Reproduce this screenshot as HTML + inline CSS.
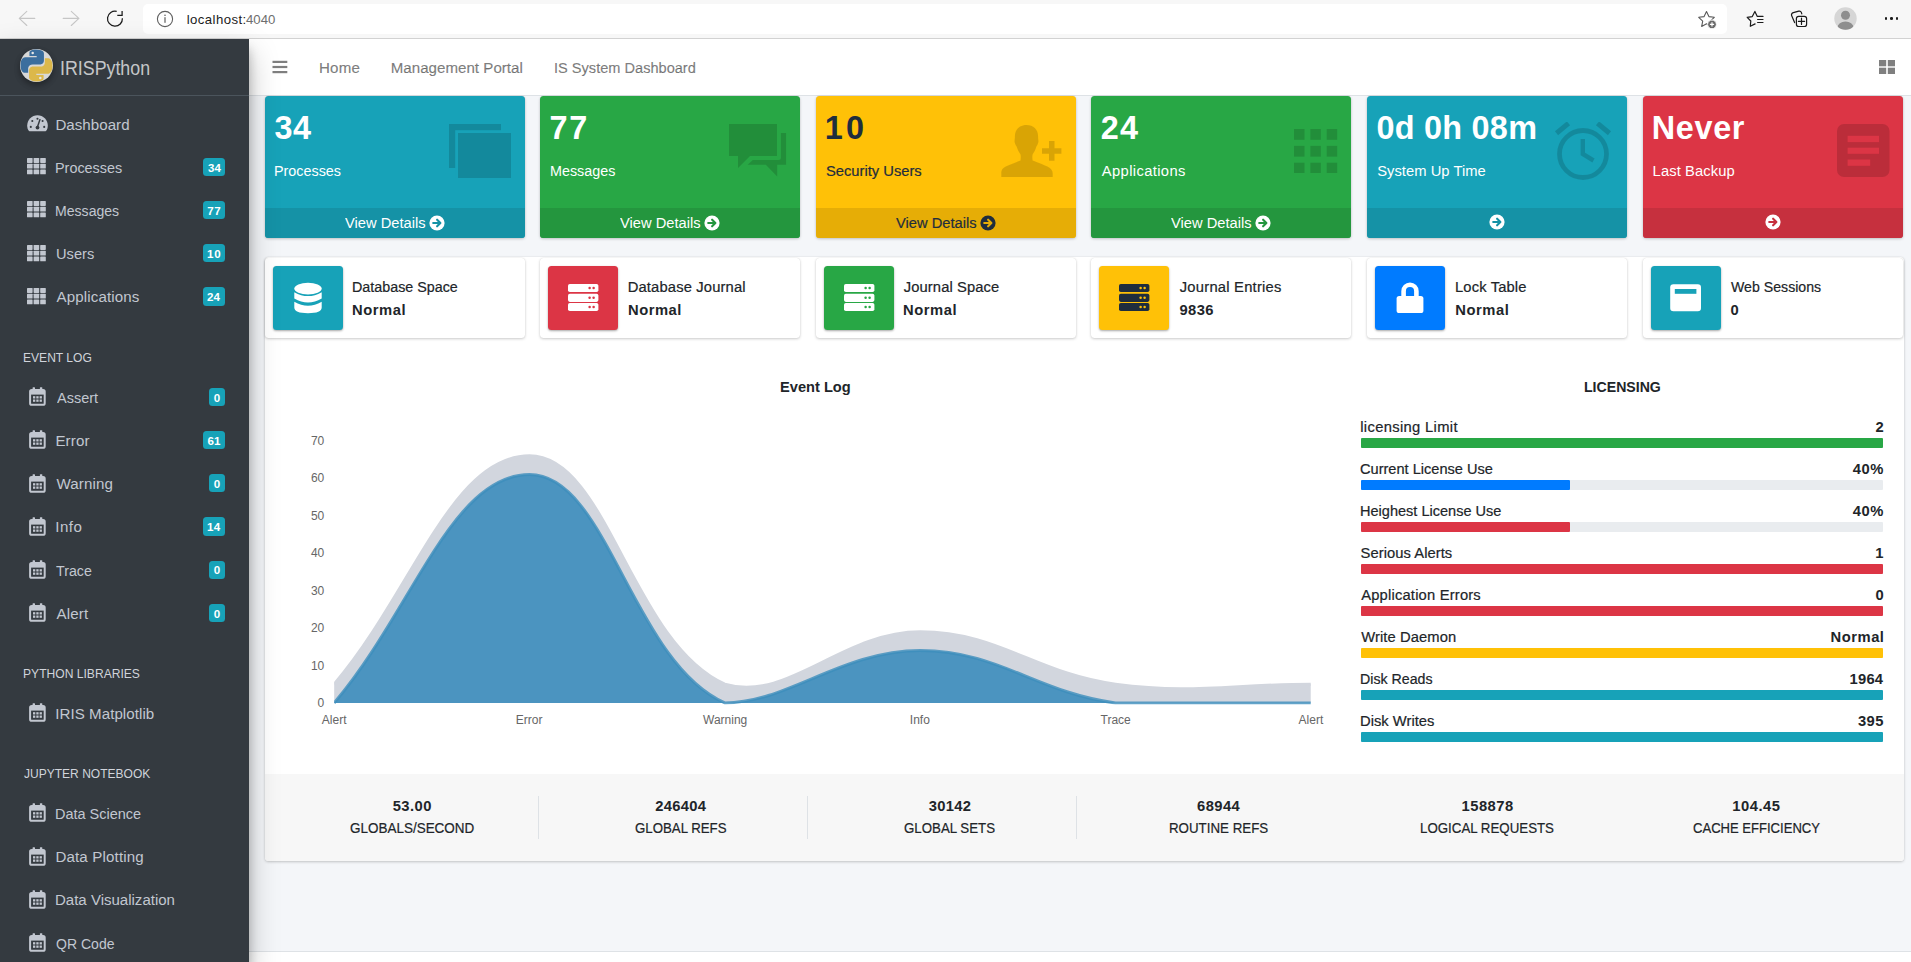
<!DOCTYPE html>
<html><head><meta charset="utf-8"><title>IRISPython</title>
<style>
html,body{margin:0;padding:0;width:1911px;height:962px;overflow:hidden;background:#fff;font-family:"Liberation Sans",sans-serif;}
.abs{position:absolute;}
.t{position:absolute;white-space:nowrap;}
.z6{z-index:6;}
</style></head><body>
<div style="position:absolute;left:0;top:0;width:1911px;height:962px;overflow:hidden">
<div class="abs" style="left:0;top:0;width:1911px;height:38px;background:#f7f7f7"></div>
<div class="abs" style="left:0;top:38px;width:1911px;height:1px;background:#d2d2d2"></div>
<svg class="abs" style="left:0;top:0" width="140" height="38" viewBox="0 0 140 38"><g fill="none" stroke="#c6c6c6" stroke-width="1.1" stroke-linecap="round" stroke-linejoin="round"><path d="M19.3 18.4H34.8M26.8 11.3 19.3 18.4 26.8 25.5"/><path d="M63.2 18.4H78.9M71.3 11.3 78.9 18.4 71.3 25.5"/></g><g fill="none" stroke="#1b1b1b" stroke-width="1.25"><path d="M116.7 11.45A7.45 7.45 0 1 0 122.4 18.3"/><path d="M117.3 15.4H122.1V10.9"/></g></svg>
<div class="abs" style="left:143px;top:4px;width:1584px;height:30px;background:#fff;border-radius:5px"></div>
<svg class="abs" style="left:156px;top:10px" width="18" height="18" viewBox="0 0 18 18"><circle cx="9" cy="9" r="7.6" fill="none" stroke="#5f5f5f" stroke-width="1.1"/><rect x="8.4" y="7.2" width="1.2" height="5.6" fill="#5f5f5f"/><circle cx="9" cy="5.2" r="0.8" fill="#5f5f5f"/></svg>
<div class="t" style="left:186.74px;top:11.95px;font-size:13.2px;line-height:15.17px;letter-spacing:0.416px;color:#1b1b1b;">localhost:</div>
<div class="t" style="left:245.94px;top:11.95px;font-size:13.2px;line-height:15.17px;letter-spacing:0.052px;color:#6e6e6e;">4040</div>
<svg class="abs" style="left:1697px;top:10px" width="22" height="20" viewBox="0 0 22 20"><path d="M9.5 1.6 11.9 6.6 17.3 7.3 13.3 11.1 14.3 16.4 9.5 13.8 4.7 16.4 5.7 11.1 1.7 7.3 7.1 6.6Z" fill="none" stroke="#5a5a5a" stroke-width="1.1" stroke-linejoin="round"/><circle cx="15" cy="14.4" r="4.4" fill="#6a6a6a" stroke="#fff" stroke-width="1"/><path d="M15 12.3v4.2M12.9 14.4h4.2" stroke="#fff" stroke-width="1.2"/></svg>
<svg class="abs" style="left:1690px;top:0" width="130" height="38" viewBox="1690 0 130 38"><g fill="none" stroke="#1b1b1b" stroke-width="1.2" stroke-linejoin="round" stroke-linecap="round"><path d="M1755.1 23.9 1750.3 26.3 1750.8 21 1747.2 17.3 1752.3 16.6 1754.9 11.4 1757.3 16.4"/><path d="M1757.6 16.4H1763M1757.6 19.5H1763M1757.6 22.5H1763"/><path d="M1794.6 22.6 1791.6 15.6Q1791 13.3 1793.3 12.7L1798.8 11.2Q1801.2 10.7 1801.8 13.9"/><rect x="1796.4" y="16.3" width="10.2" height="10.2" rx="2.3"/><path d="M1801.5 18.2V24.5M1798.35 21.35H1804.65"/></g></svg>
<svg class="abs" style="left:1834px;top:7px" width="23" height="23" viewBox="0 0 23 23"><defs><clipPath id="pc"><circle cx="11.5" cy="11.5" r="11.2"/></clipPath></defs><circle cx="11.5" cy="11.5" r="11.2" fill="#d6d6d6"/><g clip-path="url(#pc)" fill="#8e8e8e"><circle cx="11.5" cy="8.3" r="4.5"/><ellipse cx="11.5" cy="20.5" rx="8" ry="6"/></g></svg>
<div class="abs" style="left:1884.6px;top:17.2px;width:2.6px;height:2.6px;border-radius:50%;background:#1b1b1b"></div>
<div class="abs" style="left:1890.2px;top:17.2px;width:2.6px;height:2.6px;border-radius:50%;background:#1b1b1b"></div>
<div class="abs" style="left:1895.8px;top:17.2px;width:2.6px;height:2.6px;border-radius:50%;background:#1b1b1b"></div>
<div class="abs" style="left:0;top:39px;width:249px;height:923px;background:#343a40;box-shadow:0 14px 28px rgba(0,0,0,.25),0 10px 10px rgba(0,0,0,.22);z-index:5"></div>
<div class="abs z6" style="left:0;top:95px;width:249px;height:1px;background:#4b545c"></div>
<div class="abs z6" style="left:20px;top:49px;width:33px;height:33px;border-radius:50%;background:#d8d8d8;box-shadow:0 3px 6px rgba(0,0,0,.16),0 3px 6px rgba(0,0,0,.23);overflow:hidden">
<svg width="33" height="33" viewBox="0 0 100 100" style="display:block"><g transform="translate(50 50) scale(1.1) translate(-50 -50)">
<path d="M49 6C30 6 30.5 14 30.5 14V24H50.5V27H20C20 27 6 25.5 6 48.5S18.5 70 18.5 70H27V59C27 59 26.5 47 39 47H59C59 47 70.5 47.2 70.5 36V17.5C70.5 17.5 72 6 49 6Z" fill="#3b6e9e"/>
<circle cx="39.5" cy="15.5" r="3.4" fill="#e8e8e8"/>
<g transform="rotate(180 50 50)"><path d="M49 6C30 6 30.5 14 30.5 14V24H50.5V27H20C20 27 6 25.5 6 48.5S18.5 70 18.5 70H27V59C27 59 26.5 47 39 47H59C59 47 70.5 47.2 70.5 36V17.5C70.5 17.5 72 6 49 6Z" fill="#dcb84a"/>
<circle cx="39.5" cy="15.5" r="3.4" fill="#e8e8e8"/></g></g></svg></div>
<div class="t" style="left:60.10px;top:56.56px;font-size:19.6px;line-height:22.52px;transform:scaleX(0.9090);transform-origin:0 0;color:rgba(255,255,255,.72);z-index:6;">IRISPython</div>
<svg class="abs z6" style="left:26.5px;top:114.8px" width="21" height="17" viewBox="0 0 21 17"><path d="M10.5 0.2C4.9 0.2 0.2 4.8 0.2 10.5c0 1.9.5 3.6 1.4 5.1.2.3.6.6 1 .6h15.8c.4 0 .8-.3 1-.6.9-1.5 1.4-3.2 1.4-5.1C20.8 4.8 16.1.2 10.5.2z" fill="#c2c7d0"/>
<g fill="#343a40"><circle cx="10.47" cy="3.8" r="1.05"/><circle cx="5.3" cy="6.0" r="1.05"/><circle cx="15.6" cy="6.0" r="1.05"/><circle cx="3.8" cy="11.9" r="1.05"/><circle cx="17.2" cy="11.9" r="1.05"/><path d="M12.4 3.9 13.8 4.3 11.4 11.6 9.9 11.2Z"/><circle cx="10.5" cy="12.6" r="1.9"/></g></svg>
<div class="t" style="left:55.39px;top:115.53px;font-size:15.1px;line-height:17.35px;letter-spacing:0.044px;color:#c2c7d0;z-index:6;">Dashboard</div>
<svg class="abs z6" style="left:27.4px;top:158.1px" width="19" height="17" viewBox="0 0 19 17"><g fill="#c2c7d0"><rect x="0.0" y="0.0" width="5.6" height="4.9" rx="0.6"/><rect x="6.6" y="0.0" width="5.6" height="4.9" rx="0.6"/><rect x="13.2" y="0.0" width="5.6" height="4.9" rx="0.6"/><rect x="0.0" y="5.7" width="5.6" height="4.9" rx="0.6"/><rect x="6.6" y="5.7" width="5.6" height="4.9" rx="0.6"/><rect x="13.2" y="5.7" width="5.6" height="4.9" rx="0.6"/><rect x="0.0" y="11.4" width="5.6" height="4.9" rx="0.6"/><rect x="6.6" y="11.4" width="5.6" height="4.9" rx="0.6"/><rect x="13.2" y="11.4" width="5.6" height="4.9" rx="0.6"/></g></svg>
<div class="t" style="left:55.45px;top:158.73px;font-size:15.1px;line-height:17.35px;transform:scaleX(0.9538);transform-origin:0 0;color:#c2c7d0;z-index:6;">Processes</div>
<div class="abs z6" style="left:203.0px;top:157.8px;width:22px;height:18.2px;border-radius:3.5px;background:#17a2b8"></div><div class="t" style="left:207.51px;top:160.65px;font-size:11.6px;line-height:13.33px;transform:scaleX(0.9898);transform-origin:0 0;font-weight:700;color:#fff;z-index:7;">34</div>
<svg class="abs z6" style="left:27.4px;top:201.29999999999998px" width="19" height="17" viewBox="0 0 19 17"><g fill="#c2c7d0"><rect x="0.0" y="0.0" width="5.6" height="4.9" rx="0.6"/><rect x="6.6" y="0.0" width="5.6" height="4.9" rx="0.6"/><rect x="13.2" y="0.0" width="5.6" height="4.9" rx="0.6"/><rect x="0.0" y="5.7" width="5.6" height="4.9" rx="0.6"/><rect x="6.6" y="5.7" width="5.6" height="4.9" rx="0.6"/><rect x="13.2" y="5.7" width="5.6" height="4.9" rx="0.6"/><rect x="0.0" y="11.4" width="5.6" height="4.9" rx="0.6"/><rect x="6.6" y="11.4" width="5.6" height="4.9" rx="0.6"/><rect x="13.2" y="11.4" width="5.6" height="4.9" rx="0.6"/></g></svg>
<div class="t" style="left:55.47px;top:201.93px;font-size:15.1px;line-height:17.35px;transform:scaleX(0.9327);transform-origin:0 0;color:#c2c7d0;z-index:6;">Messages</div>
<div class="abs z6" style="left:203.0px;top:201.0px;width:22px;height:18.2px;border-radius:3.5px;background:#17a2b8"></div><div class="t" style="left:207.34px;top:203.85px;font-size:11.6px;line-height:13.33px;letter-spacing:0.452px;font-weight:700;color:#fff;z-index:7;">77</div>
<svg class="abs z6" style="left:27.4px;top:244.5px" width="19" height="17" viewBox="0 0 19 17"><g fill="#c2c7d0"><rect x="0.0" y="0.0" width="5.6" height="4.9" rx="0.6"/><rect x="6.6" y="0.0" width="5.6" height="4.9" rx="0.6"/><rect x="13.2" y="0.0" width="5.6" height="4.9" rx="0.6"/><rect x="0.0" y="5.7" width="5.6" height="4.9" rx="0.6"/><rect x="6.6" y="5.7" width="5.6" height="4.9" rx="0.6"/><rect x="13.2" y="5.7" width="5.6" height="4.9" rx="0.6"/><rect x="0.0" y="11.4" width="5.6" height="4.9" rx="0.6"/><rect x="6.6" y="11.4" width="5.6" height="4.9" rx="0.6"/><rect x="13.2" y="11.4" width="5.6" height="4.9" rx="0.6"/></g></svg>
<div class="t" style="left:55.50px;top:245.13px;font-size:15.1px;line-height:17.35px;transform:scaleX(0.9695);transform-origin:0 0;color:#c2c7d0;z-index:6;">Users</div>
<div class="abs z6" style="left:203.0px;top:244.2px;width:22px;height:18.2px;border-radius:3.5px;background:#17a2b8"></div><div class="t" style="left:207.10px;top:247.05px;font-size:11.6px;line-height:13.33px;letter-spacing:0.684px;font-weight:700;color:#fff;z-index:7;">10</div>
<svg class="abs z6" style="left:27.4px;top:287.7px" width="19" height="17" viewBox="0 0 19 17"><g fill="#c2c7d0"><rect x="0.0" y="0.0" width="5.6" height="4.9" rx="0.6"/><rect x="6.6" y="0.0" width="5.6" height="4.9" rx="0.6"/><rect x="13.2" y="0.0" width="5.6" height="4.9" rx="0.6"/><rect x="0.0" y="5.7" width="5.6" height="4.9" rx="0.6"/><rect x="6.6" y="5.7" width="5.6" height="4.9" rx="0.6"/><rect x="13.2" y="5.7" width="5.6" height="4.9" rx="0.6"/><rect x="0.0" y="11.4" width="5.6" height="4.9" rx="0.6"/><rect x="6.6" y="11.4" width="5.6" height="4.9" rx="0.6"/><rect x="13.2" y="11.4" width="5.6" height="4.9" rx="0.6"/></g></svg>
<div class="t" style="left:56.60px;top:288.33px;font-size:15.1px;line-height:17.35px;letter-spacing:0.131px;color:#c2c7d0;z-index:6;">Applications</div>
<div class="abs z6" style="left:203.0px;top:287.4px;width:22px;height:18.2px;border-radius:3.5px;background:#17a2b8"></div><div class="t" style="left:207.39px;top:290.25px;font-size:11.6px;line-height:13.33px;transform:scaleX(0.9990);transform-origin:0 0;font-weight:700;color:#fff;z-index:7;">24</div>
<div class="t" style="left:22.74px;top:349.96px;font-size:13.3px;line-height:15.28px;transform:scaleX(0.9069);transform-origin:0 0;color:#d0d4db;z-index:6;">EVENT LOG</div>
<svg class="abs z6" style="left:28.6px;top:387.2px" width="17" height="19" viewBox="0 0 17 19"><rect x="1.1" y="3.0" width="14.6" height="14.8" rx="1.6" fill="none" stroke="#c2c7d0" stroke-width="2"/><rect x="1" y="3" width="15" height="4.6" fill="#c2c7d0"/><rect x="3.6" y="0.2" width="2.4" height="3.6" rx="0.5" fill="#c2c7d0"/><rect x="10.9" y="0.2" width="2.4" height="3.6" rx="0.5" fill="#c2c7d0"/>
<g fill="#c2c7d0"><rect x="4" y="9.2" width="2.3" height="2.3"/><rect x="7.3" y="9.2" width="2.3" height="2.3"/><rect x="10.6" y="9.2" width="2.3" height="2.3"/><rect x="4" y="12.5" width="2.3" height="2.3"/><rect x="7.3" y="12.5" width="2.3" height="2.3"/><rect x="10.6" y="12.5" width="2.3" height="2.3"/></g></svg>
<div class="t" style="left:56.60px;top:388.73px;font-size:15.1px;line-height:17.35px;transform:scaleX(0.9611);transform-origin:0 0;color:#c2c7d0;z-index:6;">Assert</div>
<div class="abs z6" style="left:208.8px;top:387.8px;width:16.2px;height:18.2px;border-radius:3.5px;background:#17a2b8"></div><div class="t" style="left:213.68px;top:390.65px;font-size:11.6px;line-height:13.33px;font-weight:700;color:#fff;z-index:7;">0</div>
<svg class="abs z6" style="left:28.6px;top:430.4px" width="17" height="19" viewBox="0 0 17 19"><rect x="1.1" y="3.0" width="14.6" height="14.8" rx="1.6" fill="none" stroke="#c2c7d0" stroke-width="2"/><rect x="1" y="3" width="15" height="4.6" fill="#c2c7d0"/><rect x="3.6" y="0.2" width="2.4" height="3.6" rx="0.5" fill="#c2c7d0"/><rect x="10.9" y="0.2" width="2.4" height="3.6" rx="0.5" fill="#c2c7d0"/>
<g fill="#c2c7d0"><rect x="4" y="9.2" width="2.3" height="2.3"/><rect x="7.3" y="9.2" width="2.3" height="2.3"/><rect x="10.6" y="9.2" width="2.3" height="2.3"/><rect x="4" y="12.5" width="2.3" height="2.3"/><rect x="7.3" y="12.5" width="2.3" height="2.3"/><rect x="10.6" y="12.5" width="2.3" height="2.3"/></g></svg>
<div class="t" style="left:55.39px;top:431.93px;font-size:15.1px;line-height:17.35px;letter-spacing:0.153px;color:#c2c7d0;z-index:6;">Error</div>
<div class="abs z6" style="left:203.0px;top:431.0px;width:22px;height:18.2px;border-radius:3.5px;background:#17a2b8"></div><div class="t" style="left:207.39px;top:433.85px;font-size:11.6px;line-height:13.33px;letter-spacing:0.220px;font-weight:700;color:#fff;z-index:7;">61</div>
<svg class="abs z6" style="left:28.6px;top:473.59999999999997px" width="17" height="19" viewBox="0 0 17 19"><rect x="1.1" y="3.0" width="14.6" height="14.8" rx="1.6" fill="none" stroke="#c2c7d0" stroke-width="2"/><rect x="1" y="3" width="15" height="4.6" fill="#c2c7d0"/><rect x="3.6" y="0.2" width="2.4" height="3.6" rx="0.5" fill="#c2c7d0"/><rect x="10.9" y="0.2" width="2.4" height="3.6" rx="0.5" fill="#c2c7d0"/>
<g fill="#c2c7d0"><rect x="4" y="9.2" width="2.3" height="2.3"/><rect x="7.3" y="9.2" width="2.3" height="2.3"/><rect x="10.6" y="9.2" width="2.3" height="2.3"/><rect x="4" y="12.5" width="2.3" height="2.3"/><rect x="7.3" y="12.5" width="2.3" height="2.3"/><rect x="10.6" y="12.5" width="2.3" height="2.3"/></g></svg>
<div class="t" style="left:56.52px;top:475.13px;font-size:15.1px;line-height:17.35px;letter-spacing:0.102px;color:#c2c7d0;z-index:6;">Warning</div>
<div class="abs z6" style="left:208.8px;top:474.2px;width:16.2px;height:18.2px;border-radius:3.5px;background:#17a2b8"></div><div class="t" style="left:213.68px;top:477.05px;font-size:11.6px;line-height:13.33px;font-weight:700;color:#fff;z-index:7;">0</div>
<svg class="abs z6" style="left:28.6px;top:516.8px" width="17" height="19" viewBox="0 0 17 19"><rect x="1.1" y="3.0" width="14.6" height="14.8" rx="1.6" fill="none" stroke="#c2c7d0" stroke-width="2"/><rect x="1" y="3" width="15" height="4.6" fill="#c2c7d0"/><rect x="3.6" y="0.2" width="2.4" height="3.6" rx="0.5" fill="#c2c7d0"/><rect x="10.9" y="0.2" width="2.4" height="3.6" rx="0.5" fill="#c2c7d0"/>
<g fill="#c2c7d0"><rect x="4" y="9.2" width="2.3" height="2.3"/><rect x="7.3" y="9.2" width="2.3" height="2.3"/><rect x="10.6" y="9.2" width="2.3" height="2.3"/><rect x="4" y="12.5" width="2.3" height="2.3"/><rect x="7.3" y="12.5" width="2.3" height="2.3"/><rect x="10.6" y="12.5" width="2.3" height="2.3"/></g></svg>
<div class="t" style="left:55.24px;top:518.33px;font-size:15.1px;line-height:17.35px;letter-spacing:0.507px;color:#c2c7d0;z-index:6;">Info</div>
<div class="abs z6" style="left:203.0px;top:517.4px;width:22px;height:18.2px;border-radius:3.5px;background:#17a2b8"></div><div class="t" style="left:207.10px;top:520.25px;font-size:11.6px;line-height:13.33px;letter-spacing:0.278px;font-weight:700;color:#fff;z-index:7;">14</div>
<svg class="abs z6" style="left:28.6px;top:560.0px" width="17" height="19" viewBox="0 0 17 19"><rect x="1.1" y="3.0" width="14.6" height="14.8" rx="1.6" fill="none" stroke="#c2c7d0" stroke-width="2"/><rect x="1" y="3" width="15" height="4.6" fill="#c2c7d0"/><rect x="3.6" y="0.2" width="2.4" height="3.6" rx="0.5" fill="#c2c7d0"/><rect x="10.9" y="0.2" width="2.4" height="3.6" rx="0.5" fill="#c2c7d0"/>
<g fill="#c2c7d0"><rect x="4" y="9.2" width="2.3" height="2.3"/><rect x="7.3" y="9.2" width="2.3" height="2.3"/><rect x="10.6" y="9.2" width="2.3" height="2.3"/><rect x="4" y="12.5" width="2.3" height="2.3"/><rect x="7.3" y="12.5" width="2.3" height="2.3"/><rect x="10.6" y="12.5" width="2.3" height="2.3"/></g></svg>
<div class="t" style="left:56.32px;top:561.53px;font-size:15.1px;line-height:17.35px;transform:scaleX(0.9414);transform-origin:0 0;color:#c2c7d0;z-index:6;">Trace</div>
<div class="abs z6" style="left:208.8px;top:560.6px;width:16.2px;height:18.2px;border-radius:3.5px;background:#17a2b8"></div><div class="t" style="left:213.68px;top:563.45px;font-size:11.6px;line-height:13.33px;font-weight:700;color:#fff;z-index:7;">0</div>
<svg class="abs z6" style="left:28.6px;top:603.1999999999999px" width="17" height="19" viewBox="0 0 17 19"><rect x="1.1" y="3.0" width="14.6" height="14.8" rx="1.6" fill="none" stroke="#c2c7d0" stroke-width="2"/><rect x="1" y="3" width="15" height="4.6" fill="#c2c7d0"/><rect x="3.6" y="0.2" width="2.4" height="3.6" rx="0.5" fill="#c2c7d0"/><rect x="10.9" y="0.2" width="2.4" height="3.6" rx="0.5" fill="#c2c7d0"/>
<g fill="#c2c7d0"><rect x="4" y="9.2" width="2.3" height="2.3"/><rect x="7.3" y="9.2" width="2.3" height="2.3"/><rect x="10.6" y="9.2" width="2.3" height="2.3"/><rect x="4" y="12.5" width="2.3" height="2.3"/><rect x="7.3" y="12.5" width="2.3" height="2.3"/><rect x="10.6" y="12.5" width="2.3" height="2.3"/></g></svg>
<div class="t" style="left:56.60px;top:604.73px;font-size:15.1px;line-height:17.35px;letter-spacing:0.111px;color:#c2c7d0;z-index:6;">Alert</div>
<div class="abs z6" style="left:208.8px;top:603.8px;width:16.2px;height:18.2px;border-radius:3.5px;background:#17a2b8"></div><div class="t" style="left:213.68px;top:606.65px;font-size:11.6px;line-height:13.33px;font-weight:700;color:#fff;z-index:7;">0</div>
<div class="t" style="left:22.73px;top:665.86px;font-size:13.3px;line-height:15.28px;transform:scaleX(0.9095);transform-origin:0 0;color:#d0d4db;z-index:6;">PYTHON LIBRARIES</div>
<svg class="abs z6" style="left:28.6px;top:703.1999999999999px" width="17" height="19" viewBox="0 0 17 19"><rect x="1.1" y="3.0" width="14.6" height="14.8" rx="1.6" fill="none" stroke="#c2c7d0" stroke-width="2"/><rect x="1" y="3" width="15" height="4.6" fill="#c2c7d0"/><rect x="3.6" y="0.2" width="2.4" height="3.6" rx="0.5" fill="#c2c7d0"/><rect x="10.9" y="0.2" width="2.4" height="3.6" rx="0.5" fill="#c2c7d0"/>
<g fill="#c2c7d0"><rect x="4" y="9.2" width="2.3" height="2.3"/><rect x="7.3" y="9.2" width="2.3" height="2.3"/><rect x="10.6" y="9.2" width="2.3" height="2.3"/><rect x="4" y="12.5" width="2.3" height="2.3"/><rect x="7.3" y="12.5" width="2.3" height="2.3"/><rect x="10.6" y="12.5" width="2.3" height="2.3"/></g></svg>
<div class="t" style="left:55.24px;top:704.73px;font-size:15.1px;line-height:17.35px;letter-spacing:0.058px;color:#c2c7d0;z-index:6;">IRIS Matplotlib</div>
<div class="t" style="left:23.52px;top:765.76px;font-size:13.3px;line-height:15.28px;transform:scaleX(0.9044);transform-origin:0 0;color:#d0d4db;z-index:6;">JUPYTER NOTEBOOK</div>
<svg class="abs z6" style="left:28.6px;top:803.4px" width="17" height="19" viewBox="0 0 17 19"><rect x="1.1" y="3.0" width="14.6" height="14.8" rx="1.6" fill="none" stroke="#c2c7d0" stroke-width="2"/><rect x="1" y="3" width="15" height="4.6" fill="#c2c7d0"/><rect x="3.6" y="0.2" width="2.4" height="3.6" rx="0.5" fill="#c2c7d0"/><rect x="10.9" y="0.2" width="2.4" height="3.6" rx="0.5" fill="#c2c7d0"/>
<g fill="#c2c7d0"><rect x="4" y="9.2" width="2.3" height="2.3"/><rect x="7.3" y="9.2" width="2.3" height="2.3"/><rect x="10.6" y="9.2" width="2.3" height="2.3"/><rect x="4" y="12.5" width="2.3" height="2.3"/><rect x="7.3" y="12.5" width="2.3" height="2.3"/><rect x="10.6" y="12.5" width="2.3" height="2.3"/></g></svg>
<div class="t" style="left:55.44px;top:804.93px;font-size:15.1px;line-height:17.35px;transform:scaleX(0.9592);transform-origin:0 0;color:#c2c7d0;z-index:6;">Data Science</div>
<svg class="abs z6" style="left:28.6px;top:846.6px" width="17" height="19" viewBox="0 0 17 19"><rect x="1.1" y="3.0" width="14.6" height="14.8" rx="1.6" fill="none" stroke="#c2c7d0" stroke-width="2"/><rect x="1" y="3" width="15" height="4.6" fill="#c2c7d0"/><rect x="3.6" y="0.2" width="2.4" height="3.6" rx="0.5" fill="#c2c7d0"/><rect x="10.9" y="0.2" width="2.4" height="3.6" rx="0.5" fill="#c2c7d0"/>
<g fill="#c2c7d0"><rect x="4" y="9.2" width="2.3" height="2.3"/><rect x="7.3" y="9.2" width="2.3" height="2.3"/><rect x="10.6" y="9.2" width="2.3" height="2.3"/><rect x="4" y="12.5" width="2.3" height="2.3"/><rect x="7.3" y="12.5" width="2.3" height="2.3"/><rect x="10.6" y="12.5" width="2.3" height="2.3"/></g></svg>
<div class="t" style="left:55.39px;top:848.13px;font-size:15.1px;line-height:17.35px;letter-spacing:0.162px;color:#c2c7d0;z-index:6;">Data Plotting</div>
<svg class="abs z6" style="left:28.6px;top:889.8px" width="17" height="19" viewBox="0 0 17 19"><rect x="1.1" y="3.0" width="14.6" height="14.8" rx="1.6" fill="none" stroke="#c2c7d0" stroke-width="2"/><rect x="1" y="3" width="15" height="4.6" fill="#c2c7d0"/><rect x="3.6" y="0.2" width="2.4" height="3.6" rx="0.5" fill="#c2c7d0"/><rect x="10.9" y="0.2" width="2.4" height="3.6" rx="0.5" fill="#c2c7d0"/>
<g fill="#c2c7d0"><rect x="4" y="9.2" width="2.3" height="2.3"/><rect x="7.3" y="9.2" width="2.3" height="2.3"/><rect x="10.6" y="9.2" width="2.3" height="2.3"/><rect x="4" y="12.5" width="2.3" height="2.3"/><rect x="7.3" y="12.5" width="2.3" height="2.3"/><rect x="10.6" y="12.5" width="2.3" height="2.3"/></g></svg>
<div class="t" style="left:55.40px;top:891.33px;font-size:15.1px;line-height:17.35px;transform:scaleX(0.9951);transform-origin:0 0;color:#c2c7d0;z-index:6;">Data Visualization</div>
<svg class="abs z6" style="left:28.6px;top:933.0px" width="17" height="19" viewBox="0 0 17 19"><rect x="1.1" y="3.0" width="14.6" height="14.8" rx="1.6" fill="none" stroke="#c2c7d0" stroke-width="2"/><rect x="1" y="3" width="15" height="4.6" fill="#c2c7d0"/><rect x="3.6" y="0.2" width="2.4" height="3.6" rx="0.5" fill="#c2c7d0"/><rect x="10.9" y="0.2" width="2.4" height="3.6" rx="0.5" fill="#c2c7d0"/>
<g fill="#c2c7d0"><rect x="4" y="9.2" width="2.3" height="2.3"/><rect x="7.3" y="9.2" width="2.3" height="2.3"/><rect x="10.6" y="9.2" width="2.3" height="2.3"/><rect x="4" y="12.5" width="2.3" height="2.3"/><rect x="7.3" y="12.5" width="2.3" height="2.3"/><rect x="10.6" y="12.5" width="2.3" height="2.3"/></g></svg>
<div class="t" style="left:55.97px;top:934.53px;font-size:15.1px;line-height:17.35px;transform:scaleX(0.9296);transform-origin:0 0;color:#c2c7d0;z-index:6;">QR Code</div>
<div class="abs" style="left:249px;top:39px;width:1662px;height:56px;background:#fff"></div>
<div class="abs" style="left:249px;top:95px;width:1662px;height:1px;background:#dee2e6"></div>
<svg class="abs" style="left:272px;top:60px" width="16" height="14" viewBox="0 0 16 14"><g fill="rgba(0,0,0,.5)"><rect x="0.5" y="0.8" width="14.8" height="2.2"/><rect x="0.5" y="5.9" width="14.8" height="2.2"/><rect x="0.5" y="11" width="14.8" height="2.2"/></g></svg>
<div class="t" style="left:318.99px;top:59.03px;font-size:15.1px;line-height:17.35px;letter-spacing:0.215px;-webkit-text-stroke:0.2px currentColor;color:rgba(0,0,0,.5);">Home</div>
<div class="t" style="left:390.69px;top:59.03px;font-size:15.1px;line-height:17.35px;letter-spacing:0.028px;-webkit-text-stroke:0.2px currentColor;color:rgba(0,0,0,.5);">Management Portal</div>
<div class="t" style="left:553.59px;top:59.03px;font-size:15.1px;line-height:17.35px;transform:scaleX(0.9660);transform-origin:0 0;-webkit-text-stroke:0.2px currentColor;color:rgba(0,0,0,.5);">IS System Dashboard</div>
<svg class="abs" style="left:1879px;top:60px" width="16" height="14" viewBox="0 0 16 14"><g fill="rgba(0,0,0,.5)"><rect x="0" y="0" width="7.2" height="6.3"/><rect x="8.8" y="0" width="7.2" height="6.3"/><rect x="0" y="7.7" width="7.2" height="6.3"/><rect x="8.8" y="7.7" width="7.2" height="6.3"/></g></svg>
<div class="abs" style="left:249px;top:96px;width:1662px;height:855px;background:#f4f6f9"></div>
<div class="abs" style="left:249px;top:951px;width:1662px;height:11px;background:#fff;border-top:1px solid #dee2e6"></div>
<div class="abs" style="left:265px;top:96px;width:260.4px;height:142px;background:#17a2b8;border-radius:3.5px;box-shadow:0 0 1px rgba(0,0,0,.125),0 1px 3px rgba(0,0,0,.2);overflow:hidden"><div style="position:absolute;left:0;bottom:0;width:100%;height:30.5px;background:#1592a6"></div></div>
<svg class="abs" style="left:448.5px;top:124px" width="62" height="54" viewBox="0 0 62 54"><path d="M0 0H52V44H0Z" fill="rgba(0,0,0,.15)"/><rect x="6.2" y="6.2" width="55.8" height="47.8" fill="#17a2b8"/><rect x="9" y="9" width="53" height="45" fill="rgba(0,0,0,.15)"/></svg>
<div class="t" style="left:274.39px;top:110.08px;font-size:32.4px;line-height:37.23px;letter-spacing:0.508px;font-weight:700;color:#fff;">34</div>
<div class="t" style="left:274.05px;top:162.65px;font-size:14.75px;line-height:16.95px;transform:scaleX(0.9734);transform-origin:0 0;color:#fff;">Processes</div>
<div class="t" style="left:345.23px;top:215.15px;font-size:14.75px;line-height:16.95px;transform:scaleX(0.9961);transform-origin:0 0;color:#fff;">View Details</div>
<svg class="abs" style="left:429.1px;top:214.6px" width="16" height="16" viewBox="0 0 16 16"><circle cx="8" cy="8" r="7.6" fill="#fff"/><path d="M4.2 8H11.2M8.1 4.7 11.4 8 8.1 11.3" fill="none" stroke="#1592a6" stroke-width="2.1" stroke-linecap="round" stroke-linejoin="round"/></svg>
<div class="abs" style="left:540px;top:96px;width:260.4px;height:142px;background:#28a745;border-radius:3.5px;box-shadow:0 0 1px rgba(0,0,0,.125),0 1px 3px rgba(0,0,0,.2);overflow:hidden"><div style="position:absolute;left:0;bottom:0;width:100%;height:30.5px;background:#24963e"></div></div>
<svg class="abs" style="left:728.7px;top:124px" width="58" height="54" viewBox="0 0 58 54"><path d="M0 0H48V32H21L9 44V32H0Z" fill="rgba(0,0,0,.15)"/><path d="M51.9 9.1H57.1V40.7H48.2V52.4L36.8 40.7H18.6L23.8 36.1H49.4Q51.9 36.1 51.9 33.6Z" fill="rgba(0,0,0,.15)"/></svg>
<div class="t" style="left:549.50px;top:110.08px;font-size:32.4px;line-height:37.23px;letter-spacing:1.628px;font-weight:700;color:#fff;">77</div>
<div class="t" style="left:549.65px;top:162.65px;font-size:14.75px;line-height:16.95px;transform:scaleX(0.9731);transform-origin:0 0;color:#fff;">Messages</div>
<div class="t" style="left:620.23px;top:215.15px;font-size:14.75px;line-height:16.95px;transform:scaleX(0.9961);transform-origin:0 0;color:#fff;">View Details</div>
<svg class="abs" style="left:704.1px;top:214.6px" width="16" height="16" viewBox="0 0 16 16"><circle cx="8" cy="8" r="7.6" fill="#fff"/><path d="M4.2 8H11.2M8.1 4.7 11.4 8 8.1 11.3" fill="none" stroke="#24963e" stroke-width="2.1" stroke-linecap="round" stroke-linejoin="round"/></svg>
<div class="abs" style="left:816px;top:96px;width:260.4px;height:142px;background:#ffc107;border-radius:3.5px;box-shadow:0 0 1px rgba(0,0,0,.125),0 1px 3px rgba(0,0,0,.2);overflow:hidden"><div style="position:absolute;left:0;bottom:0;width:100%;height:30.5px;background:#e6ad06"></div></div>
<svg class="abs" style="left:1001.0px;top:124px" width="62" height="54" viewBox="0 0 62 54"><path d="M25.5 1C18.6 1 13.8 5.6 13.9 12.2 13.9 14.2 13.7 15.6 13.6 16.4 13.3 18.4 14.3 20.4 15.5 22.3 16.5 25.2 17.9 28.5 19.4 30.2 19.9 31.6 19.8 34 19.5 36.5 15.8 38 9 40.5 4.8 42.6 1 44.4 0.3 46.8 0.3 49.4V53H51.7V49.4C51.7 46.8 50.3 44.3 46.4 42.5 42 40.5 35.3 38 31.6 36.5 31.3 34 31.2 31.6 31.7 30.2 33.2 28.5 34.6 25.2 35.5 22.3 36.7 20.4 37.7 18.4 37.4 16.4 37.3 15.6 37.1 14.2 37.1 12.2 37.2 5.6 32.4 1 25.5 1Z" fill="rgba(0,0,0,.15)"/><path d="M48 17H53.5V24.2H60.4V29.7H53.5V36.8H48V29.7H41V24.2H48Z" fill="rgba(0,0,0,.15)"/></svg>
<div class="t" style="left:824.76px;top:110.08px;font-size:32.4px;line-height:37.23px;letter-spacing:3.276px;font-weight:700;color:#1f2d3d;">10</div>
<div class="t" style="left:826.04px;top:162.65px;font-size:14.75px;line-height:16.95px;transform:scaleX(0.9979);transform-origin:0 0;-webkit-text-stroke:0.2px currentColor;color:#1f2d3d;">Security Users</div>
<div class="t" style="left:896.23px;top:215.15px;font-size:14.75px;line-height:16.95px;transform:scaleX(0.9961);transform-origin:0 0;-webkit-text-stroke:0.2px currentColor;color:#1f2d3d;">View Details</div>
<svg class="abs" style="left:980.1px;top:214.6px" width="16" height="16" viewBox="0 0 16 16"><circle cx="8" cy="8" r="7.6" fill="#1f2d3d"/><path d="M4.2 8H11.2M8.1 4.7 11.4 8 8.1 11.3" fill="none" stroke="#e6ad06" stroke-width="2.1" stroke-linecap="round" stroke-linejoin="round"/></svg>
<div class="abs" style="left:1091px;top:96px;width:260.4px;height:142px;background:#28a745;border-radius:3.5px;box-shadow:0 0 1px rgba(0,0,0,.125),0 1px 3px rgba(0,0,0,.2);overflow:hidden"><div style="position:absolute;left:0;bottom:0;width:100%;height:30.5px;background:#24963e"></div></div>
<svg class="abs" style="left:1294.0px;top:129px" width="44" height="44" viewBox="0 0 44 44"><g fill="rgba(0,0,0,.15)"><rect x="0.00" y="0.00" width="10.5" height="10.8"/><rect x="16.35" y="0.00" width="10.5" height="10.8"/><rect x="32.70" y="0.00" width="10.5" height="10.8"/><rect x="0.00" y="16.85" width="10.5" height="10.8"/><rect x="16.35" y="16.85" width="10.5" height="10.8"/><rect x="32.70" y="16.85" width="10.5" height="10.8"/><rect x="0.00" y="33.70" width="10.5" height="10.8"/><rect x="16.35" y="33.70" width="10.5" height="10.8"/><rect x="32.70" y="33.70" width="10.5" height="10.8"/></g></svg>
<div class="t" style="left:1100.67px;top:110.08px;font-size:32.4px;line-height:37.23px;letter-spacing:1.332px;font-weight:700;color:#fff;">24</div>
<div class="t" style="left:1101.80px;top:162.65px;font-size:14.75px;line-height:16.95px;letter-spacing:0.365px;color:#fff;">Applications</div>
<div class="t" style="left:1171.23px;top:215.15px;font-size:14.75px;line-height:16.95px;transform:scaleX(0.9961);transform-origin:0 0;color:#fff;">View Details</div>
<svg class="abs" style="left:1255.1px;top:214.6px" width="16" height="16" viewBox="0 0 16 16"><circle cx="8" cy="8" r="7.6" fill="#fff"/><path d="M4.2 8H11.2M8.1 4.7 11.4 8 8.1 11.3" fill="none" stroke="#24963e" stroke-width="2.1" stroke-linecap="round" stroke-linejoin="round"/></svg>
<div class="abs" style="left:1367px;top:96px;width:260.4px;height:142px;background:#17a2b8;border-radius:3.5px;box-shadow:0 0 1px rgba(0,0,0,.125),0 1px 3px rgba(0,0,0,.2);overflow:hidden"><div style="position:absolute;left:0;bottom:0;width:100%;height:30.5px;background:#1592a6"></div></div>
<svg class="abs" style="left:1554.0px;top:122px" width="60" height="60" viewBox="0 0 60 60"><circle cx="29" cy="32" r="23.5" fill="none" stroke="rgba(0,0,0,.15)" stroke-width="4.8"/><path d="M28.8 17V32L39.5 38.5" fill="none" stroke="rgba(0,0,0,.15)" stroke-width="4.4"/><path d="M2.5 11.2 14.5 1.3M55.5 11.2 43.5 1.3" stroke="rgba(0,0,0,.15)" stroke-width="5"/></svg>
<div class="t" style="left:1376.50px;top:110.08px;font-size:32.4px;line-height:37.23px;letter-spacing:0.250px;font-weight:700;color:#fff;">0d 0h 08m</div>
<div class="t" style="left:1377.14px;top:162.65px;font-size:14.75px;line-height:16.95px;letter-spacing:0.034px;color:#fff;">System Up Time</div>
<svg class="abs" style="left:1489.2px;top:214.3px" width="16" height="16" viewBox="0 0 16 16"><circle cx="8" cy="8" r="7.6" fill="#fff"/><path d="M4.2 8H11.2M8.1 4.7 11.4 8 8.1 11.3" fill="none" stroke="#1592a6" stroke-width="2.1" stroke-linecap="round" stroke-linejoin="round"/></svg>
<div class="abs" style="left:1643px;top:96px;width:260.4px;height:142px;background:#dc3545;border-radius:3.5px;box-shadow:0 0 1px rgba(0,0,0,.125),0 1px 3px rgba(0,0,0,.2);overflow:hidden"><div style="position:absolute;left:0;bottom:0;width:100%;height:30.5px;background:#c6303e"></div></div>
<svg class="abs" style="left:1836.5px;top:124px" width="53" height="53" viewBox="0 0 53 53"><rect x="0" y="0" width="52.5" height="53" rx="7" fill="rgba(0,0,0,.15)"/><g fill="#dc3545"><rect x="10.6" y="11.8" width="31.4" height="6.3"/><rect x="10.6" y="23.7" width="31.4" height="6.1"/><rect x="10.6" y="35.5" width="22.6" height="6.3"/></g></svg>
<div class="t" style="left:1651.69px;top:110.08px;font-size:32.4px;line-height:37.23px;letter-spacing:0.680px;font-weight:700;color:#fff;">Never</div>
<div class="t" style="left:1652.62px;top:162.65px;font-size:14.75px;line-height:16.95px;letter-spacing:0.095px;color:#fff;">Last Backup</div>
<svg class="abs" style="left:1765.2px;top:214.3px" width="16" height="16" viewBox="0 0 16 16"><circle cx="8" cy="8" r="7.6" fill="#fff"/><path d="M4.2 8H11.2M8.1 4.7 11.4 8 8.1 11.3" fill="none" stroke="#c6303e" stroke-width="2.1" stroke-linecap="round" stroke-linejoin="round"/></svg>
<div class="abs" style="left:265px;top:257px;width:1638.5px;height:604px;background:#fff;border-radius:3.5px;box-shadow:0 0 1px rgba(0,0,0,.125),0 1px 3px rgba(0,0,0,.2);overflow:hidden"><div style="position:absolute;left:0;top:517px;width:100%;height:87px;background:#f7f7f7;border-top:0px solid rgba(0,0,0,.125)"></div></div>
<div class="abs" style="left:265px;top:257.5px;width:260.4px;height:80.5px;background:#fff;border-radius:3.5px;box-shadow:0 0 1px rgba(0,0,0,.125),0 1px 3px rgba(0,0,0,.2);"></div>
<div class="abs" style="left:273.0px;top:266px;width:70px;height:64px;background:#17a2b8;border-radius:3.5px;box-shadow:0 1px 3px rgba(0,0,0,.12),0 1px 2px rgba(0,0,0,.24)"></div>
<svg class="abs" style="left:294.0px;top:282.0px" width="28" height="32" viewBox="0 0 28 32"><g fill="#fff"><ellipse cx="14" cy="6.6" rx="13.7" ry="5.9"/><path d="M0.3 10.2Q14 18 27.7 10.2V16.5Q14 24.4 0.3 16.5Z"/><path d="M0.3 19.8Q14 27.6 27.7 19.8V25.6Q27.7 31.3 14 31.3 0.3 31.3 0.3 25.6Z"/></g></svg>
<div class="t" style="left:351.86px;top:278.65px;font-size:14.75px;line-height:16.95px;transform:scaleX(0.9699);transform-origin:0 0;-webkit-text-stroke:0.2px currentColor;color:#212529;">Database Space</div>
<div class="t" style="left:352.04px;top:301.65px;font-size:14.75px;line-height:16.95px;letter-spacing:0.541px;font-weight:700;color:#212529;">Normal</div>
<div class="abs" style="left:540px;top:257.5px;width:260.4px;height:80.5px;background:#fff;border-radius:3.5px;box-shadow:0 0 1px rgba(0,0,0,.125),0 1px 3px rgba(0,0,0,.2);"></div>
<div class="abs" style="left:548.0px;top:266px;width:70px;height:64px;background:#dc3545;border-radius:3.5px;box-shadow:0 1px 3px rgba(0,0,0,.12),0 1px 2px rgba(0,0,0,.24)"></div>
<svg class="abs" style="left:567.8px;top:284.2px" width="31" height="28" viewBox="0 0 31 28"><rect x="0" y="0" width="30.4" height="8.1" rx="1.8" fill="#fff"/><circle cx="21.6" cy="4.05" r="1.25" fill="#dc3545"/><circle cx="25.6" cy="4.05" r="1.25" fill="#dc3545"/><rect x="0" y="9.8" width="30.4" height="8.1" rx="1.8" fill="#fff"/><circle cx="21.6" cy="13.850000000000001" r="1.25" fill="#dc3545"/><circle cx="25.6" cy="13.850000000000001" r="1.25" fill="#dc3545"/><rect x="0" y="19.0" width="30.4" height="8.1" rx="1.8" fill="#fff"/><circle cx="21.6" cy="23.05" r="1.25" fill="#dc3545"/><circle cx="25.6" cy="23.05" r="1.25" fill="#dc3545"/></svg>
<div class="t" style="left:627.72px;top:278.65px;font-size:14.75px;line-height:16.95px;letter-spacing:0.145px;-webkit-text-stroke:0.2px currentColor;color:#212529;">Database Journal</div>
<div class="t" style="left:627.94px;top:301.65px;font-size:14.75px;line-height:16.95px;letter-spacing:0.541px;font-weight:700;color:#212529;">Normal</div>
<div class="abs" style="left:816px;top:257.5px;width:260.4px;height:80.5px;background:#fff;border-radius:3.5px;box-shadow:0 0 1px rgba(0,0,0,.125),0 1px 3px rgba(0,0,0,.2);"></div>
<div class="abs" style="left:824.0px;top:266px;width:70px;height:64px;background:#28a745;border-radius:3.5px;box-shadow:0 1px 3px rgba(0,0,0,.12),0 1px 2px rgba(0,0,0,.24)"></div>
<svg class="abs" style="left:843.8px;top:284.2px" width="31" height="28" viewBox="0 0 31 28"><rect x="0" y="0" width="30.4" height="8.1" rx="1.8" fill="#fff"/><circle cx="21.6" cy="4.05" r="1.25" fill="#28a745"/><circle cx="25.6" cy="4.05" r="1.25" fill="#28a745"/><rect x="0" y="9.8" width="30.4" height="8.1" rx="1.8" fill="#fff"/><circle cx="21.6" cy="13.850000000000001" r="1.25" fill="#28a745"/><circle cx="25.6" cy="13.850000000000001" r="1.25" fill="#28a745"/><rect x="0" y="19.0" width="30.4" height="8.1" rx="1.8" fill="#fff"/><circle cx="21.6" cy="23.05" r="1.25" fill="#28a745"/><circle cx="25.6" cy="23.05" r="1.25" fill="#28a745"/></svg>
<div class="t" style="left:903.78px;top:278.65px;font-size:14.75px;line-height:16.95px;letter-spacing:0.103px;-webkit-text-stroke:0.2px currentColor;color:#212529;">Journal Space</div>
<div class="t" style="left:903.04px;top:301.65px;font-size:14.75px;line-height:16.95px;letter-spacing:0.541px;font-weight:700;color:#212529;">Normal</div>
<div class="abs" style="left:1091px;top:257.5px;width:260.4px;height:80.5px;background:#fff;border-radius:3.5px;box-shadow:0 0 1px rgba(0,0,0,.125),0 1px 3px rgba(0,0,0,.2);"></div>
<div class="abs" style="left:1099.0px;top:266px;width:70px;height:64px;background:#ffc107;border-radius:3.5px;box-shadow:0 1px 3px rgba(0,0,0,.12),0 1px 2px rgba(0,0,0,.24)"></div>
<svg class="abs" style="left:1118.8px;top:284.2px" width="31" height="28" viewBox="0 0 31 28"><rect x="0" y="0" width="30.4" height="8.1" rx="1.8" fill="#1f2d3d"/><circle cx="21.6" cy="4.05" r="1.25" fill="#ffc107"/><circle cx="25.6" cy="4.05" r="1.25" fill="#ffc107"/><rect x="0" y="9.8" width="30.4" height="8.1" rx="1.8" fill="#1f2d3d"/><circle cx="21.6" cy="13.850000000000001" r="1.25" fill="#ffc107"/><circle cx="25.6" cy="13.850000000000001" r="1.25" fill="#ffc107"/><rect x="0" y="19.0" width="30.4" height="8.1" rx="1.8" fill="#1f2d3d"/><circle cx="21.6" cy="23.05" r="1.25" fill="#ffc107"/><circle cx="25.6" cy="23.05" r="1.25" fill="#ffc107"/></svg>
<div class="t" style="left:1179.78px;top:278.65px;font-size:14.75px;line-height:16.95px;letter-spacing:0.233px;-webkit-text-stroke:0.2px currentColor;color:#212529;">Journal Entries</div>
<div class="t" style="left:1179.48px;top:301.65px;font-size:14.75px;line-height:16.95px;letter-spacing:0.405px;font-weight:700;color:#212529;">9836</div>
<div class="abs" style="left:1367px;top:257.5px;width:260.4px;height:80.5px;background:#fff;border-radius:3.5px;box-shadow:0 0 1px rgba(0,0,0,.125),0 1px 3px rgba(0,0,0,.2);"></div>
<div class="abs" style="left:1375.0px;top:266px;width:70px;height:64px;background:#007bff;border-radius:3.5px;box-shadow:0 1px 3px rgba(0,0,0,.12),0 1px 2px rgba(0,0,0,.24)"></div>
<svg class="abs" style="left:1396.0px;top:281px" width="28" height="33" viewBox="0 0 28 33"><path d="M7.6 15V10.2A6.4 6.4 0 0 1 20.4 10.2V15" fill="none" stroke="#fff" stroke-width="4.6"/><rect x="0.6" y="15" width="26.8" height="17" rx="2.6" fill="#fff"/></svg>
<div class="t" style="left:1455.02px;top:278.65px;font-size:14.75px;line-height:16.95px;letter-spacing:0.126px;-webkit-text-stroke:0.2px currentColor;color:#212529;">Lock Table</div>
<div class="t" style="left:1455.24px;top:301.65px;font-size:14.75px;line-height:16.95px;letter-spacing:0.541px;font-weight:700;color:#212529;">Normal</div>
<div class="abs" style="left:1643px;top:257.5px;width:260.4px;height:80.5px;background:#fff;border-radius:3.5px;box-shadow:0 0 1px rgba(0,0,0,.125),0 1px 3px rgba(0,0,0,.2);"></div>
<div class="abs" style="left:1651.0px;top:266px;width:70px;height:64px;background:#17a2b8;border-radius:3.5px;box-shadow:0 1px 3px rgba(0,0,0,.12),0 1px 2px rgba(0,0,0,.24)"></div>
<svg class="abs" style="left:1670.4px;top:284px" width="32" height="28" viewBox="0 0 32 28"><rect x="0.2" y="0.2" width="30.8" height="27" rx="3.2" fill="#fff"/><rect x="4.8" y="5" width="21.6" height="4.8" fill="#17a2b8"/></svg>
<div class="t" style="left:1730.93px;top:278.65px;font-size:14.75px;line-height:16.95px;transform:scaleX(0.9589);transform-origin:0 0;-webkit-text-stroke:0.2px currentColor;color:#212529;">Web Sessions</div>
<div class="t" style="left:1730.41px;top:301.65px;font-size:14.75px;line-height:16.95px;font-weight:700;color:#212529;">0</div>
<div class="t" style="left:779.95px;top:378.95px;font-size:14.75px;line-height:16.95px;transform:scaleX(0.9914);transform-origin:0 0;font-weight:700;color:#212529;">Event Log</div>
<div class="t" style="left:1583.58px;top:378.95px;font-size:14.75px;line-height:16.95px;transform:scaleX(0.9567);transform-origin:0 0;font-weight:700;color:#212529;">LICENSING</div>
<div class="abs" style="left:1361px;top:438.2px;width:522px;height:10px;background:#e9ecef;border-radius:1px"></div>
<div class="abs" style="left:1361px;top:438.2px;width:522.0px;height:10px;background:#28a745;border-radius:1px"></div>
<div class="t" style="left:1360.24px;top:418.85px;font-size:14.75px;line-height:16.95px;letter-spacing:0.329px;-webkit-text-stroke:0.2px currentColor;color:#212529;">licensing Limit</div>
<div class="t" style="left:1875.40px;top:418.85px;font-size:14.75px;line-height:16.95px;font-weight:700;color:#212529;">2</div>
<div class="abs" style="left:1361px;top:480.2px;width:522px;height:10px;background:#e9ecef;border-radius:1px"></div>
<div class="abs" style="left:1361px;top:480.2px;width:208.8px;height:10px;background:#007bff;border-radius:1px"></div>
<div class="t" style="left:1360.47px;top:460.85px;font-size:14.75px;line-height:16.95px;transform:scaleX(0.9884);transform-origin:0 0;-webkit-text-stroke:0.2px currentColor;color:#212529;">Current License Use</div>
<div class="t" style="left:1852.78px;top:460.85px;font-size:14.75px;line-height:16.95px;letter-spacing:0.545px;font-weight:700;color:#212529;">40%</div>
<div class="abs" style="left:1361px;top:522.2px;width:522px;height:10px;background:#e9ecef;border-radius:1px"></div>
<div class="abs" style="left:1361px;top:522.2px;width:208.8px;height:10px;background:#dc3545;border-radius:1px"></div>
<div class="t" style="left:1360.04px;top:502.85px;font-size:14.75px;line-height:16.95px;transform:scaleX(0.9852);transform-origin:0 0;-webkit-text-stroke:0.2px currentColor;color:#212529;">Heighest License Use</div>
<div class="t" style="left:1852.78px;top:502.85px;font-size:14.75px;line-height:16.95px;letter-spacing:0.545px;font-weight:700;color:#212529;">40%</div>
<div class="abs" style="left:1361px;top:564.2px;width:522px;height:10px;background:#e9ecef;border-radius:1px"></div>
<div class="abs" style="left:1361px;top:564.2px;width:522.0px;height:10px;background:#dc3545;border-radius:1px"></div>
<div class="t" style="left:1360.54px;top:544.85px;font-size:14.75px;line-height:16.95px;letter-spacing:0.052px;-webkit-text-stroke:0.2px currentColor;color:#212529;">Serious Alerts</div>
<div class="t" style="left:1875.18px;top:544.85px;font-size:14.75px;line-height:16.95px;font-weight:700;color:#212529;">1</div>
<div class="abs" style="left:1361px;top:606.2px;width:522px;height:10px;background:#e9ecef;border-radius:1px"></div>
<div class="abs" style="left:1361px;top:606.2px;width:522.0px;height:10px;background:#dc3545;border-radius:1px"></div>
<div class="t" style="left:1361.20px;top:586.85px;font-size:14.75px;line-height:16.95px;letter-spacing:0.185px;-webkit-text-stroke:0.2px currentColor;color:#212529;">Application Errors</div>
<div class="t" style="left:1875.40px;top:586.85px;font-size:14.75px;line-height:16.95px;font-weight:700;color:#212529;">0</div>
<div class="abs" style="left:1361px;top:648.2px;width:522px;height:10px;background:#e9ecef;border-radius:1px"></div>
<div class="abs" style="left:1361px;top:648.2px;width:522.0px;height:10px;background:#ffc107;border-radius:1px"></div>
<div class="t" style="left:1361.13px;top:628.85px;font-size:14.75px;line-height:16.95px;letter-spacing:0.098px;-webkit-text-stroke:0.2px currentColor;color:#212529;">Write Daemon</div>
<div class="t" style="left:1830.54px;top:628.85px;font-size:14.75px;line-height:16.95px;letter-spacing:0.521px;font-weight:700;color:#212529;">Normal</div>
<div class="abs" style="left:1361px;top:690.2px;width:522px;height:10px;background:#e9ecef;border-radius:1px"></div>
<div class="abs" style="left:1361px;top:690.2px;width:522.0px;height:10px;background:#17a2b8;border-radius:1px"></div>
<div class="t" style="left:1360.06px;top:670.85px;font-size:14.75px;line-height:16.95px;transform:scaleX(0.9627);transform-origin:0 0;-webkit-text-stroke:0.2px currentColor;color:#212529;">Disk Reads</div>
<div class="t" style="left:1849.52px;top:670.85px;font-size:14.75px;line-height:16.95px;letter-spacing:0.247px;font-weight:700;color:#212529;">1964</div>
<div class="abs" style="left:1361px;top:732.2px;width:522px;height:10px;background:#e9ecef;border-radius:1px"></div>
<div class="abs" style="left:1361px;top:732.2px;width:522.0px;height:10px;background:#17a2b8;border-radius:1px"></div>
<div class="t" style="left:1360.02px;top:712.85px;font-size:14.75px;line-height:16.95px;letter-spacing:0.003px;-webkit-text-stroke:0.2px currentColor;color:#212529;">Disk Writes</div>
<div class="t" style="left:1858.03px;top:712.85px;font-size:14.75px;line-height:16.95px;letter-spacing:0.389px;font-weight:700;color:#212529;">395</div>
<div class="t" style="left:392.66px;top:797.65px;font-size:14.75px;line-height:16.95px;letter-spacing:0.464px;font-weight:700;color:#212529;">53.00</div>
<div class="t" style="left:349.78px;top:819.65px;font-size:14.75px;line-height:16.95px;transform:scaleX(0.9134);transform-origin:0 0;-webkit-text-stroke:0.2px currentColor;color:#212529;">GLOBALS/SECOND</div>
<div class="t" style="left:655.23px;top:797.65px;font-size:14.75px;line-height:16.95px;letter-spacing:0.320px;font-weight:700;color:#212529;">246404</div>
<div class="t" style="left:635.04px;top:819.65px;font-size:14.75px;line-height:16.95px;transform:scaleX(0.8983);transform-origin:0 0;-webkit-text-stroke:0.2px currentColor;color:#212529;">GLOBAL REFS</div>
<div class="t" style="left:928.68px;top:797.65px;font-size:14.75px;line-height:16.95px;letter-spacing:0.338px;font-weight:700;color:#212529;">30142</div>
<div class="t" style="left:904.19px;top:819.65px;font-size:14.75px;line-height:16.95px;transform:scaleX(0.9006);transform-origin:0 0;-webkit-text-stroke:0.2px currentColor;color:#212529;">GLOBAL SETS</div>
<div class="t" style="left:1197.08px;top:797.65px;font-size:14.75px;line-height:16.95px;letter-spacing:0.421px;font-weight:700;color:#212529;">68944</div>
<div class="t" style="left:1168.83px;top:819.65px;font-size:14.75px;line-height:16.95px;transform:scaleX(0.9030);transform-origin:0 0;-webkit-text-stroke:0.2px currentColor;color:#212529;">ROUTINE REFS</div>
<div class="t" style="left:1461.57px;top:797.65px;font-size:14.75px;line-height:16.95px;letter-spacing:0.467px;font-weight:700;color:#212529;">158878</div>
<div class="t" style="left:1420.34px;top:819.65px;font-size:14.75px;line-height:16.95px;transform:scaleX(0.9015);transform-origin:0 0;-webkit-text-stroke:0.2px currentColor;color:#212529;">LOGICAL REQUESTS</div>
<div class="t" style="left:1732.36px;top:797.65px;font-size:14.75px;line-height:16.95px;letter-spacing:0.504px;font-weight:700;color:#212529;">104.45</div>
<div class="t" style="left:1692.80px;top:819.65px;font-size:14.75px;line-height:16.95px;transform:scaleX(0.8852);transform-origin:0 0;-webkit-text-stroke:0.2px currentColor;color:#212529;">CACHE EFFICIENCY</div>
<div class="abs" style="left:538.4px;top:796px;width:1px;height:43px;background:#dee2e6"></div>
<div class="abs" style="left:807.4px;top:796px;width:1px;height:43px;background:#dee2e6"></div>
<div class="abs" style="left:1076.4px;top:796px;width:1px;height:43px;background:#dee2e6"></div>
<svg class="abs" style="left:0;top:0" width="1911" height="962" viewBox="0 0 1911 962"><defs><clipPath id="ca"><rect x="334.1" y="438.89" width="976.7499999999999" height="265.51"/></clipPath></defs><g clip-path="url(#ca)">
<path d="M334.10 684.18C412.24 592.86 451.31 455.86 529.45 455.86C607.59 455.86 631.39 642.13 724.80 684.18C787.67 702.90 842.01 631.78 920.15 631.78C998.29 631.78 1036.00 673.52 1115.50 684.18C1192.28 694.48 1232.71 684.18 1310.85 684.18L1310.85 702.90L334.10 702.90Z" fill="rgb(210,214,222)"/>
<path d="M334.10 684.18C412.24 592.86 451.31 455.86 529.45 455.86C607.59 455.86 631.39 642.13 724.80 684.18C787.67 702.90 842.01 631.78 920.15 631.78C998.29 631.78 1036.00 673.52 1115.50 684.18C1192.28 694.48 1232.71 684.18 1310.85 684.18" fill="none" stroke="rgb(210,214,222)" stroke-width="3"/>
<path d="M334.10 702.90C412.24 611.57 451.31 474.58 529.45 474.58C607.59 474.58 631.39 660.84 724.80 702.90C787.67 702.90 842.01 650.50 920.15 650.50C998.29 650.50 1036.00 692.24 1115.50 702.90C1192.28 702.90 1232.71 702.90 1310.85 702.90L1310.85 702.90L334.10 702.90Z" fill="rgba(60,141,188,0.9)"/>
<path d="M334.10 702.90C412.24 611.57 451.31 474.58 529.45 474.58C607.59 474.58 631.39 660.84 724.80 702.90C787.67 702.90 842.01 650.50 920.15 650.50C998.29 650.50 1036.00 692.24 1115.50 702.90C1192.28 702.90 1232.71 702.90 1310.85 702.90" fill="none" stroke="rgba(60,141,188,0.8)" stroke-width="3"/>
</g></svg>
<div class="t" style="left:317.56px;top:697.04px;font-size:12px;line-height:13.79px;color:#666;">0</div>
<div class="t" style="left:310.90px;top:659.61px;font-size:12px;line-height:13.79px;color:#666;">10</div>
<div class="t" style="left:310.90px;top:622.18px;font-size:12px;line-height:13.79px;color:#666;">20</div>
<div class="t" style="left:310.90px;top:584.75px;font-size:12px;line-height:13.79px;color:#666;">30</div>
<div class="t" style="left:310.90px;top:547.32px;font-size:12px;line-height:13.79px;color:#666;">40</div>
<div class="t" style="left:310.90px;top:509.89px;font-size:12px;line-height:13.79px;color:#666;">50</div>
<div class="t" style="left:310.90px;top:472.46px;font-size:12px;line-height:13.79px;color:#666;">60</div>
<div class="t" style="left:310.90px;top:435.03px;font-size:12px;line-height:13.79px;color:#666;">70</div>
<div class="t" style="left:321.80px;top:713.94px;font-size:12px;line-height:13.79px;color:#666;">Alert</div>
<div class="t" style="left:515.74px;top:713.94px;font-size:12px;line-height:13.79px;color:#666;">Error</div>
<div class="t" style="left:703.05px;top:713.94px;font-size:12px;line-height:13.79px;color:#666;">Warning</div>
<div class="t" style="left:909.86px;top:713.94px;font-size:12px;line-height:13.79px;color:#666;">Info</div>
<div class="t" style="left:1100.53px;top:713.94px;font-size:12px;line-height:13.79px;color:#666;">Trace</div>
<div class="t" style="left:1298.55px;top:713.94px;font-size:12px;line-height:13.79px;color:#666;">Alert</div>
</div>
</body></html>
